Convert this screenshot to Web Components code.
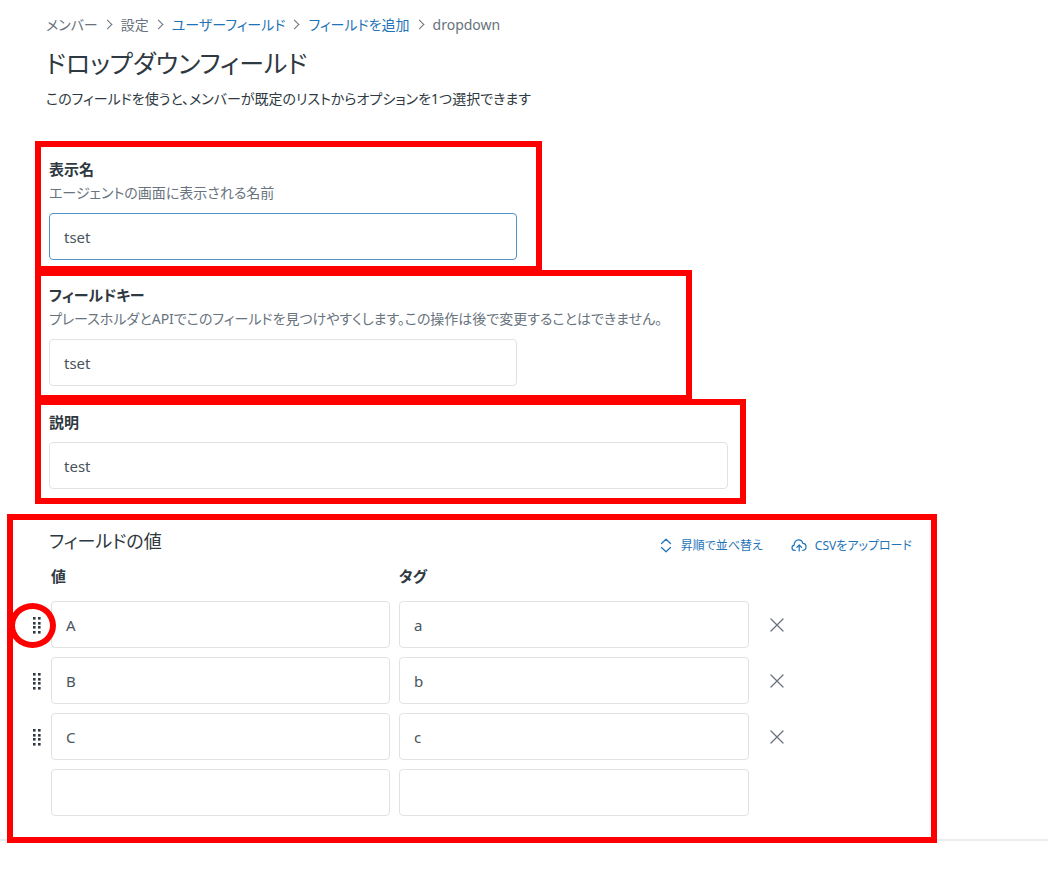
<!DOCTYPE html>
<html lang="ja">
<head>
<meta charset="utf-8">
<title>ドロップダウンフィールド</title>
<style>
  body {
    margin: 0;
    background: #fff;
    color: #2f3941;
    font: 14px/24px "Noto Sans", "Noto Sans CJK JP", sans-serif;
    font-feature-settings: "palt";
    --mark: #f00;
    --line: #e0e2e4;
    --muted: #68737d;
    --link: #1f73b7;
  }
</style>
</head>
<body>
<field-page></field-page>

<script>
const inputStyles = `
  input {
    display: block;
    box-sizing: border-box;
    width: 100%;
    height: 47px;
    padding: 0 14px;
    border: 1px solid var(--line);
    border-radius: 4px;
    background: #fff;
    color: #49545c;
    font: inherit;
    font-size: 15px;
    outline: none;
  }
`;

const icons = {
  sort: `<svg width="14" height="16" viewBox="0 0 14 16" fill="none" stroke="currentColor" stroke-width="1.2" stroke-linecap="round" stroke-linejoin="round"><path d="M2.5 5.5 7 1.2 11.5 5.5M2.5 9.5 7 13.8 11.5 9.5"/></svg>`,
  upload: `<svg width="16" height="16" viewBox="0 0 16 16" fill="none" stroke="currentColor" stroke-width="1.2" stroke-linecap="round" stroke-linejoin="round"><path d="M4.3 12.3H3.6A2.6 2.6 0 0 1 1 9.7C1 8.3 1.9 7.3 3.2 7.1 3 4 5 1.8 7.6 1.8c2.2 0 3.8 1.4 4.2 3.6 2 .1 3.2 1.6 3.2 3.4 0 2-1.3 3.5-3 3.5h-.3M8.2 12.9V7.3M5.8 9.4l2.4-2.4 2.4 2.4"/></svg>`
};

class BreadCrumbs extends HTMLElement {
  connectedCallback() {
    this.attachShadow({ mode: 'open' }).innerHTML = `
      <style>
        :host { display: block; color: var(--muted); }
        ol { display: flex; flex-wrap: wrap; margin: 0; padding: 0; list-style: none; }
        li { display: flex; align-items: center; }
        li + li::before {
          content: "";
          width: 6px;
          height: 6px;
          margin: 0 10px 2px 6px;
          border: solid var(--muted);
          border-width: 1px 1px 0 0;
          transform: rotate(45deg);
        }
        a { color: var(--link); text-decoration: none; }
      </style>
      <nav aria-label="breadcrumb">
        <ol>
          <li>メンバー</li>
          <li>設定</li>
          <li><a href="#fields">ユーザーフィールド</a></li>
          <li><a href="#add">フィールドを追加</a></li>
          <li>dropdown</li>
        </ol>
      </nav>
    `;
  }
}

// Box with a thick red outline round its content
class MarkedBox extends HTMLElement {
  connectedCallback() {
    this.attachShadow({ mode: 'open' }).innerHTML = `
      <style>
        :host {
          display: block;
          box-sizing: border-box;
          border: 6px solid var(--mark);
          background: #fff;
        }
      </style>
      <slot></slot>
    `;
  }
}

class TextField extends HTMLElement {
  connectedCallback() {
    const hint = this.getAttribute('hint');
    this.attachShadow({ mode: 'open' }).innerHTML = `
      <style>
        :host { display: block; }
        label { display: block; font-size: 15px; font-weight: 600; }
        p { margin: 0; color: var(--muted); }
        .control { max-width: var(--control-width, 468px); margin-top: 8px; }
        ${inputStyles}
        :host([active]) input { border-color: #5293c7; }
      </style>
      <label for="control">${this.getAttribute('label')}</label>
      ${hint ? `<p id="hint">${hint}</p>` : ''}
      <div class="control">
        <input id="control" type="text" value="${this.getAttribute('value')}" ${hint ? 'aria-describedby="hint"' : ''}>
      </div>
    `;
  }
}

class ActionButton extends HTMLElement {
  connectedCallback() {
    this.attachShadow({ mode: 'open' }).innerHTML = `
      <style>
        :host { display: block; }
        button {
          display: flex;
          align-items: center;
          gap: 8px;
          padding: 0;
          border: 0;
          background: none;
          color: var(--link);
          font: inherit;
          font-size: 12px;
          line-height: 24px;
          font-feature-settings: inherit;
          white-space: nowrap;
          cursor: pointer;
        }
      </style>
      <button type="button">${icons[this.getAttribute('icon')]}<span><slot></slot></span></button>
    `;
  }
}

class ValueRow extends HTMLElement {
  connectedCallback() {
    const value = this.getAttribute('value') || '';
    const tag = this.getAttribute('tag') || '';
    const dots = [1, 6, 10, 15]
      .map(y => `<rect x="1" y="${y}" width="2.6" height="2.6"/><rect x="6" y="${y}" width="2.6" height="2.6"/>`)
      .join('');
    this.attachShadow({ mode: 'open' }).innerHTML = `
      <style>
        :host { display: grid; grid-template-columns: var(--columns); column-gap: 9px; align-items: center; }
        ${inputStyles}
        button {
          display: flex;
          align-items: center;
          justify-content: center;
          width: 20px;
          height: 28px;
          padding: 0;
          border: 0;
          background: none;
          color: var(--muted);
          cursor: pointer;
        }
        .handle { position: relative; color: #2f3941; cursor: grab; }
        .remove { margin-left: 9px; }
        :host([circled]) .handle::after {
          content: "";
          position: absolute;
          top: -8px;
          left: -18px;
          box-sizing: border-box;
          width: 47px;
          height: 45px;
          border: 6px solid var(--mark);
          border-radius: 50%;
        }
      </style>
      ${value ? `<button class="handle" type="button" aria-label="移動"><svg width="10" height="18" fill="currentColor">${dots}</svg></button>` : '<span></span>'}
      <input type="text" aria-label="値" value="${value}">
      <input type="text" aria-label="タグ" value="${tag}">
      ${value ? `<button class="remove" type="button" aria-label="削除"><svg width="16" height="16" stroke="currentColor" stroke-width="1.3" stroke-linecap="round"><path d="m2 2 12 12M14 2 2 14"/></svg></button>` : ''}
    `;
  }
}

class FieldValues extends HTMLElement {
  connectedCallback() {
    this.attachShadow({ mode: 'open' }).innerHTML = `
      <style>
        :host {
          display: block;
          padding: 7px 19px 21px 14px;
          --columns: 15px minmax(0, 339px) minmax(0, 350px) 30px;
        }
        header { display: flex; justify-content: space-between; align-items: flex-start; padding-left: 22px; }
        h2 { margin: 0; font-size: 18px; font-weight: 400; line-height: 28px; }
        .actions { display: flex; gap: 28px; padding-top: 7px; }
        .labels {
          display: grid;
          grid-template-columns: var(--columns);
          column-gap: 9px;
          padding: 6px 0 13px;
          font-size: 15px;
          font-weight: 600;
        }
        .labels span:first-child { grid-column: 2; }
        .rows { display: flex; flex-direction: column; gap: 9px; }
      </style>
      <header>
        <h2>フィールドの値</h2>
        <div class="actions">
          <action-button icon="sort">昇順で並べ替え</action-button>
          <action-button icon="upload">CSVをアップロード</action-button>
        </div>
      </header>
      <div class="labels"><span>値</span><span>タグ</span></div>
      <div class="rows">
        <value-row value="A" tag="a" circled></value-row>
        <value-row value="B" tag="b"></value-row>
        <value-row value="C" tag="c"></value-row>
        <value-row></value-row>
      </div>
    `;
  }
}

class FieldPage extends HTMLElement {
  connectedCallback() {
    this.attachShadow({ mode: 'open' }).innerHTML = `
      <style>
        :host { display: block; }
        header { padding: 13px 46px 30px; }
        h1 { margin: 6px 0 4px; font-size: 25px; font-weight: 400; line-height: 40px; }
        header p { margin: 0; }
        .fields { padding: 0 35px; }
        .fields marked-box + marked-box { margin-top: -2px; }
        .name { max-width: 507px; padding: 10px 8px 6px; }
        .key { max-width: 657px; padding: 7px 8px 9px; }
        .description { max-width: 711px; padding: 5px 12px 9px 8px; --control-width: 679px; }
        .values { position: relative; max-width: 930px; margin: 10px 7px 0; }
        /* rule runs behind the bottom edge of the values box */
        footer { margin-top: -4px; padding-bottom: 24px; border-top: 2px solid #ebecee; }
      </style>
      <header>
        <bread-crumbs></bread-crumbs>
        <h1>ドロップダウンフィールド</h1>
        <p>このフィールドを使うと、メンバーが既定のリストからオプションを1つ選択できます</p>
      </header>
      <div class="fields">
        <marked-box class="name">
          <text-field label="表示名" hint="エージェントの画面に表示される名前" value="tset" active></text-field>
        </marked-box>
        <marked-box class="key">
          <text-field label="フィールドキー" hint="プレースホルダとAPIでこのフィールドを見つけやすくします。この操作は後で変更することはできません。" value="tset"></text-field>
        </marked-box>
        <marked-box class="description">
          <text-field label="説明" value="test"></text-field>
        </marked-box>
      </div>
      <marked-box class="values"><field-values></field-values></marked-box>
      <footer></footer>
    `;
  }
}

customElements.define('bread-crumbs', BreadCrumbs);
customElements.define('marked-box', MarkedBox);
customElements.define('text-field', TextField);
customElements.define('action-button', ActionButton);
customElements.define('value-row', ValueRow);
customElements.define('field-values', FieldValues);
customElements.define('field-page', FieldPage);
</script>
</body>
</html>
